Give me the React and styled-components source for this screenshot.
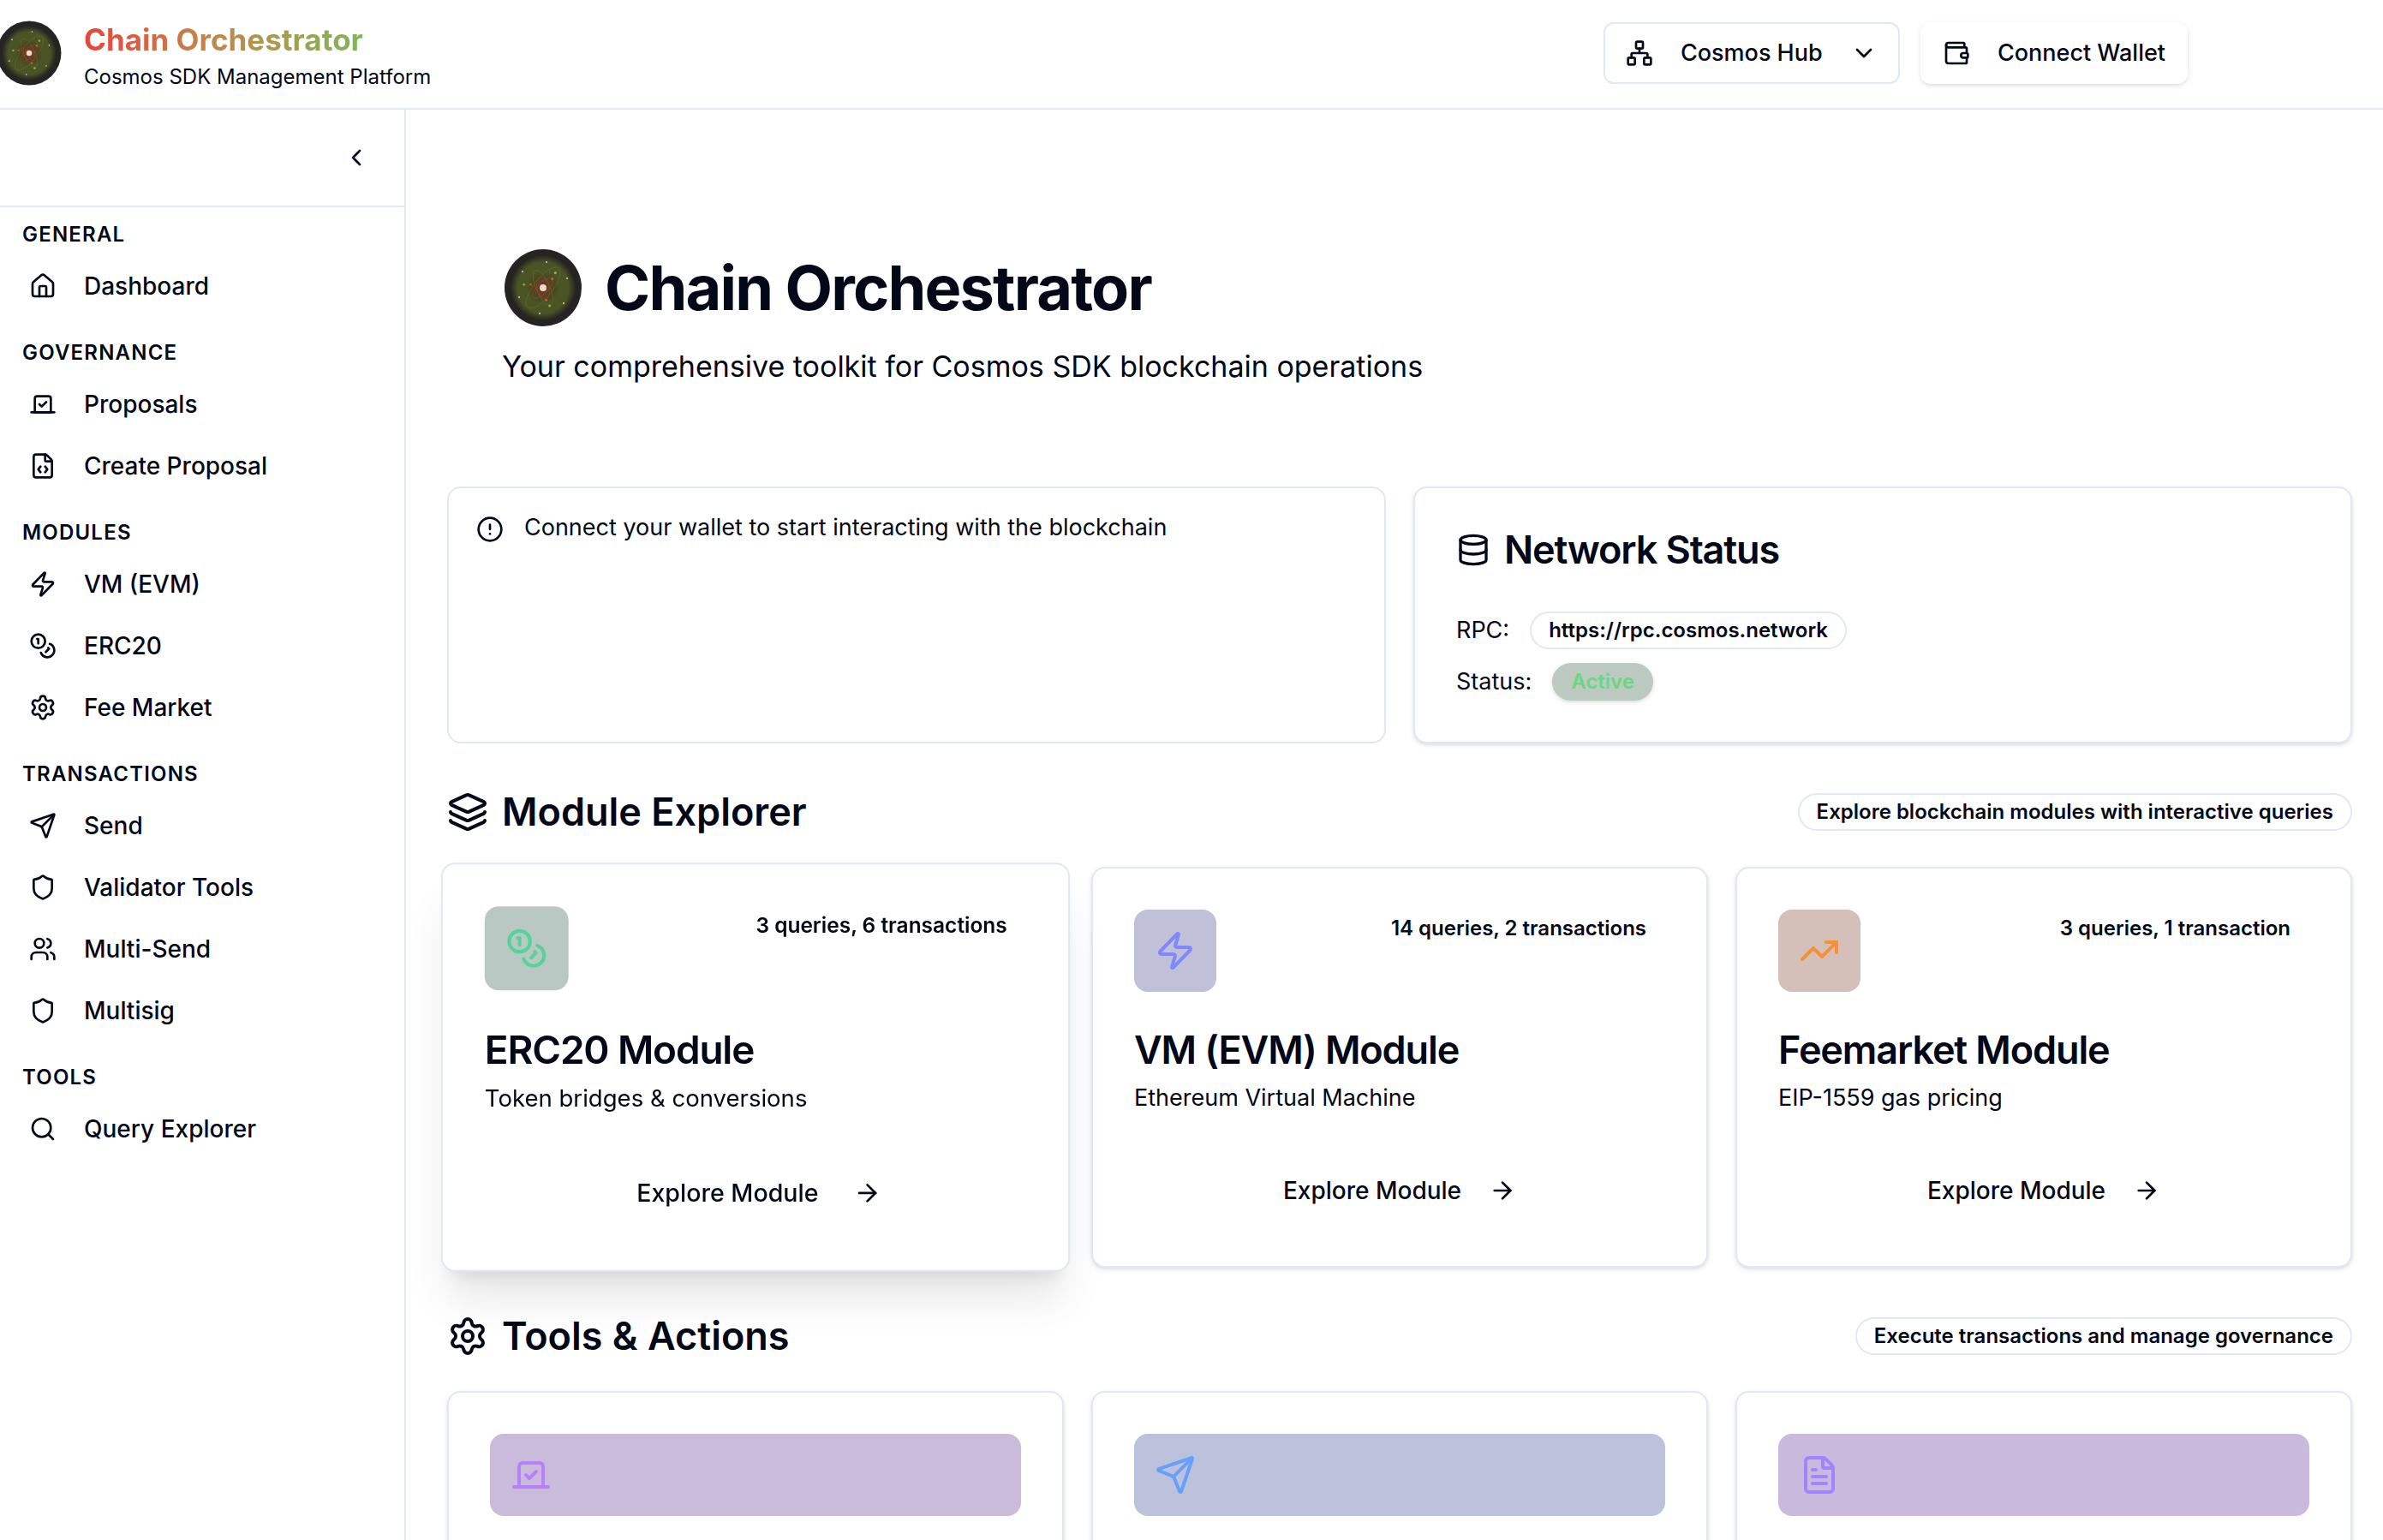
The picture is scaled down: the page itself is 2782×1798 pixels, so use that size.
import React from 'react';
import styled, { createGlobalStyle, css } from 'styled-components';
import {
  ArrowRight,
  ChevronDown,
  ChevronLeft,
  CircleAlert,
  Coins,
  Database,
  FileCode,
  FileText,
  House,
  Layers,
  Network,
  Search,
  Send,
  Settings,
  Shield,
  TrendingUp,
  Users,
  Vote,
  Wallet,
  Zap,
} from 'lucide-react';

const COLORS = {
  text: '#020817',
  border: '#e2e8f0',
  white: '#ffffff',
};

const SHADOWS = {
  card: '0 2px 6px rgba(0, 0, 0, 0.1), 0 2px 4px -2px rgba(0, 0, 0, 0.1)',
  raised:
    '0 40px 50px -10px rgba(0, 0, 0, 0.1), 0 16px 20px -12px rgba(0, 0, 0, 0.1)',
};

const NAV_GROUPS = [
  {
    label: 'General',
    items: [{ name: 'Dashboard', icon: House }],
  },
  {
    label: 'Governance',
    items: [
      { name: 'Proposals', icon: Vote },
      { name: 'Create Proposal', icon: FileCode },
    ],
  },
  {
    label: 'Modules',
    items: [
      { name: 'VM (EVM)', icon: Zap },
      { name: 'ERC20', icon: Coins },
      { name: 'Fee Market', icon: Settings },
    ],
  },
  {
    label: 'Transactions',
    items: [
      { name: 'Send', icon: Send },
      { name: 'Validator Tools', icon: Shield },
      { name: 'Multi-Send', icon: Users },
      { name: 'Multisig', icon: Shield },
    ],
  },
  {
    label: 'Tools',
    items: [{ name: 'Query Explorer', icon: Search }],
  },
];

const MODULES = [
  {
    name: 'ERC20 Module',
    description: 'Token bridges & conversions',
    stats: '3 queries, 6 transactions',
    icon: Coins,
    color: '#54d49a',
    background: '#bac8c3',
    active: true,
  },
  {
    name: 'VM (EVM) Module',
    description: 'Ethereum Virtual Machine',
    stats: '14 queries, 2 transactions',
    icon: Zap,
    color: '#7f88fc',
    background: '#c0c0d8',
  },
  {
    name: 'Feemarket Module',
    description: 'EIP-1559 gas pricing',
    stats: '3 queries, 1 transaction',
    icon: TrendingUp,
    color: '#f99035',
    background: '#d4c0b8',
  },
];

const TOOLS = [
  { id: 'vote', icon: Vote, color: '#b980fb', background: '#cabbda' },
  { id: 'send', icon: Send, color: '#66a0ff', background: '#bdc2dc' },
  { id: 'draft', icon: FileText, color: '#a384ff', background: '#c8b9dd' },
];

const Logo = ({ size }) => (
  <LogoSvg width={size} height={size} viewBox="0 0 96 96" aria-hidden="true">
    <defs>
      <radialGradient id={`glow-${size}`} cx="0.5" cy="0.5" r="0.5">
        <stop offset="0" stopColor="#9a3a26" />
        <stop offset="0.14" stopColor="#6c3a20" />
        <stop offset="0.36" stopColor="#484721" />
        <stop offset="0.5" stopColor="#4a5424" />
        <stop offset="0.78" stopColor="#4b5325" />
        <stop offset="1" stopColor="#252423" />
      </radialGradient>
    </defs>
    <circle cx="48" cy="48" r="45" fill="#252423" />
    <circle cx="48" cy="48" r="38" fill={`url(#glow-${size})`} />
    <g fill="none" strokeWidth="0.5" opacity="0.6">
      <ellipse cx="48" cy="48" rx="29" ry="11" stroke="#7d8a35" transform="rotate(-52 48 48)" />
      <ellipse cx="48" cy="48" rx="22" ry="8" stroke="#7d8a35" transform="rotate(66 48 48)" />
      <ellipse cx="48" cy="48" rx="16" ry="6" stroke="#c4523a" transform="rotate(-45 48 48)" />
      <ellipse cx="48" cy="48" rx="13" ry="7" stroke="#c4523a" transform="rotate(75 48 48)" strokeDasharray="3 1" />
    </g>
    <g fill="#d5d6bd">
      <circle cx="52" cy="18" r="1" />
      <circle cx="24" cy="29" r="1" />
      <circle cx="76" cy="37" r="1" />
      <circle cx="20" cy="59" r="1" />
      <circle cx="72" cy="66" r="1" />
      <circle cx="44" cy="78" r="1" />
    </g>
    <g fill="#8fae35">
      <circle cx="62.3" cy="30.7" r="1.6" />
      <circle cx="25.7" cy="44.3" r="1.4" />
      <circle cx="55.7" cy="69" r="1.6" />
    </g>
    <g fill="#d0503a">
      <circle cx="58.7" cy="37.7" r="1.6" />
      <circle cx="33.3" cy="44" r="1.5" opacity="0.8" />
      <circle cx="51.7" cy="62.3" r="1.6" />
    </g>
    <circle cx="48" cy="48" r="4" fill="#ecdccc" />
  </LogoSvg>
);

const ModuleCard = ({
  name,
  description,
  stats,
  icon: Icon,
  color,
  background,
  active,
}) => {
  return (
    <Card as="article" $raised={active}>
      <CardTop>
        <IconTile $color={color} $background={background}>
          <Icon size={48} />
        </IconTile>
        <Badge $variant="plain">{stats}</Badge>
      </CardTop>
      <ModuleName>{name}</ModuleName>
      <Description>{description}</Description>
      <ExploreButton type="button">
        Explore Module
        <ExploreArrow size={32} $active={active} />
      </ExploreButton>
    </Card>
  );
};

const App = () => {
  return (
    <>
      <GlobalStyle />
      <Shell>
        <Header>
          <HeaderInner>
            <Brand href="#">
              <Logo size={80} />
              <span>
                <BrandName>Chain Orchestrator</BrandName>
                <BrandTagline>Cosmos SDK Management Platform</BrandTagline>
              </span>
            </Brand>
            <HeaderActions>
              <NetworkPicker>
                <Network size={32} />
                <NetworkSelect aria-label="Network" defaultValue="cosmoshub">
                  <option value="cosmoshub">Cosmos Hub</option>
                </NetworkSelect>
                <ChevronDown size={32} />
              </NetworkPicker>
              <WalletButton type="button">
                <Wallet size={32} />
                Connect Wallet
              </WalletButton>
            </HeaderActions>
          </HeaderInner>
        </Header>

        <Body>
          <Sidebar>
            <SidebarTop>
              <CollapseButton type="button" aria-label="Collapse sidebar">
                <ChevronLeft size={32} />
              </CollapseButton>
            </SidebarTop>
            <Nav>
              {NAV_GROUPS.map(({ label, items }) => (
                <section key={label}>
                  <NavLabel>{label}</NavLabel>
                  {items.map(({ name, icon: Icon }) => (
                    <NavLink key={name} href="#">
                      <Icon size={32} />
                      {name}
                    </NavLink>
                  ))}
                </section>
              ))}
            </Nav>
          </Sidebar>

          <Main>
            <Hero>
              <HeroTitleRow>
                <Logo size={96} />
                <HeroTitle>Chain Orchestrator</HeroTitle>
              </HeroTitleRow>
              <HeroText>
                Your comprehensive toolkit for Cosmos SDK blockchain operations
              </HeroText>
            </Hero>

            <Grid $columns={2}>
              <Alert role="status">
                <CircleAlert size={32} />
                <p>Connect your wallet to start interacting with the blockchain</p>
              </Alert>
              <Card>
                <StatusTitle>
                  <Database size={40} />
                  Network Status
                </StatusTitle>
                <StatusList>
                  <StatusRow>
                    <dt>RPC:</dt>
                    <dd><Badge>https://rpc.cosmos.network</Badge></dd>
                  </StatusRow>
                  <StatusRow>
                    <dt>Status:</dt>
                    <dd><Badge $variant="success">Active</Badge></dd>
                  </StatusRow>
                </StatusList>
              </Card>
            </Grid>

            <section>
              <SectionHeader>
                <SectionTitle>
                  <Layers size={48} />
                  Module Explorer
                </SectionTitle>
                <Badge>Explore blockchain modules with interactive queries</Badge>
              </SectionHeader>
              <Grid $columns={3}>
                {MODULES.map((module) => (
                  <ModuleCard key={module.name} {...module} />
                ))}
              </Grid>
            </section>

            <section>
              <SectionHeader>
                <SectionTitle>
                  <Settings size={48} />
                  Tools &amp; Actions
                </SectionTitle>
                <Badge>Execute transactions and manage governance</Badge>
              </SectionHeader>
              <Grid $columns={3}>
                {TOOLS.map(({ id, icon: Icon, color, background }) => (
                  <Card key={id}>
                    <IconTile $color={color} $background={background}>
                      <Icon size={48} />
                    </IconTile>
                  </Card>
                ))}
              </Grid>
            </section>
          </Main>
        </Body>
      </Shell>
    </>
  );
};

const GlobalStyle = createGlobalStyle`
  *, *::before, *::after {
    box-sizing: border-box;
  }

  body {
    margin: 0;
    overflow: hidden;
    background: ${COLORS.white};
    color: ${COLORS.text};
    font-family: Inter, 'Liberation Sans', sans-serif;
    font-size: 27px;
    line-height: 40px;
  }

  h1, h2, h3, p, dl, dd {
    margin: 0;
  }

  a {
    color: inherit;
    text-decoration: none;
  }

  button, select {
    font: inherit;
    color: inherit;
  }

  svg {
    flex-shrink: 0;
  }
`;

// The centered container is a little wider than the window,
// so it bleeds past both edges.
const Shell = styled.div`
  display: flex;
  flex-direction: column;
  height: 100vh;
  margin: 0 -12px 0 -6px;
`;

const LogoSvg = styled.svg`
  display: block;
`;

const Header = styled.header`
  flex-shrink: 0;
  height: 128px;
  padding-bottom: 2px;
  border-bottom: 2px solid ${COLORS.border};
`;

const HeaderInner = styled.div`
  display: flex;
  align-items: center;
  justify-content: space-between;
  height: 100%;
  max-width: 2560px;
`;

const Brand = styled.a`
  display: flex;
  align-items: center;
  gap: 24px;
`;

const BrandName = styled.span`
  display: block;
  width: fit-content;
  font-size: 35px;
  line-height: 56px;
  font-weight: 700;
  background: linear-gradient(to right, #e8443f, #c58149 40%, #b0964f 65%, #7eb75c);
  background-clip: text;
  color: transparent;
`;

const BrandTagline = styled.span`
  display: block;
  font-size: 24px;
  line-height: 32px;
`;

const HeaderActions = styled.div`
  display: flex;
  gap: 24px;
`;

const control = css`
  display: flex;
  align-items: center;
  gap: 32px;
  height: 72px;
  padding: 0 24px;
  border: 2px solid transparent;
  border-radius: 12px;
  background: ${COLORS.white};
  font-weight: 500;
`;

const NetworkPicker = styled.label`
  ${control}
  border-color: ${COLORS.border};
`;

const NetworkSelect = styled.select`
  appearance: none;
  padding: 0;
  border: none;
  background: transparent;
`;

const WalletButton = styled.button`
  ${control}
  box-shadow: ${SHADOWS.card};
`;

const Body = styled.div`
  display: flex;
  flex: 1;
  min-height: 0;
`;

const Sidebar = styled.aside`
  flex: 0 0 480px;
  border-right: 2px solid ${COLORS.border};
`;

const SidebarTop = styled.div`
  display: flex;
  justify-content: flex-end;
  padding: 16px;
  border-bottom: 2px solid ${COLORS.border};
`;

const CollapseButton = styled.button`
  display: grid;
  place-items: center;
  width: 80px;
  height: 80px;
  border: none;
  border-radius: 12px;
  background: transparent;
`;

const Nav = styled.nav`
  display: flex;
  flex-direction: column;
  gap: 26px;
  padding: 16px;
`;

const NavLabel = styled.h3`
  margin-bottom: 8px;
  padding: 0 16px;
  font-size: 24px;
  line-height: 32px;
  font-weight: 600;
  letter-spacing: 0.05em;
  text-transform: uppercase;
`;

const NavLink = styled.a`
  display: flex;
  align-items: center;
  gap: 32px;
  height: 72px;
  padding: 0 24px;
  font-size: 28px;
  font-weight: 500;
`;

const Main = styled.main`
  display: flex;
  flex: 1;
  flex-direction: column;
  gap: 48px;
  min-width: 0;
  padding: 32px 48px;
  overflow: hidden;

  & > * {
    flex-shrink: 0;
  }
`;

const Hero = styled.section`
  padding: 128px 64px 64px;
`;

const HeroTitleRow = styled.div`
  display: flex;
  align-items: center;
  gap: 24px;
`;

const HeroTitle = styled.h1`
  font-size: 72px;
  line-height: 80px;
  font-weight: 700;
  letter-spacing: -0.025em;
`;

const HeroText = styled.p`
  margin-top: 16px;
  font-size: 34px;
  line-height: 56px;
`;

const Grid = styled.div`
  display: grid;
  grid-template-columns: repeat(${(p) => p.$columns}, minmax(0, 1fr));
  gap: 32px;
`;

const Alert = styled.div`
  display: flex;
  gap: 24px;
  padding: 32px;
  border: 2px solid ${COLORS.border};
  border-radius: 16px;
  line-height: 28px;
`;

const Card = styled.div`
  padding: 48px;
  border: 2px solid ${COLORS.border};
  border-radius: 16px;
  background: ${COLORS.white};
  box-shadow: ${(p) => p.$raised ? SHADOWS.raised : SHADOWS.card};
  transform: ${(p) => p.$raised ? 'scale(1.02)' : 'none'};
`;

const cardTitle = css`
  font-size: 45px;
  line-height: 48px;
  font-weight: 600;
  letter-spacing: -0.025em;
`;

const StatusTitle = styled.h3`
  ${cardTitle}
  display: flex;
  align-items: center;
  gap: 16px;
`;

const StatusList = styled.dl`
  display: grid;
  gap: 16px;
  margin-top: 48px;
`;

const StatusRow = styled.div`
  display: flex;
  align-items: center;
  gap: 24px;
  height: 44px;
`;

const BADGE_VARIANTS = {
  outline: css`
    border-color: ${COLORS.border};
  `,
  plain: css`
    border-color: transparent;
  `,
  success: css`
    border-color: transparent;
    background: #bccabf;
    color: #68d980;
    box-shadow: ${SHADOWS.card};
  `,
};

const Badge = styled.span`
  display: block;
  padding: 4px 20px;
  border: 2px solid;
  border-radius: 22px;
  font-size: 24px;
  line-height: 32px;
  font-weight: 600;
  white-space: nowrap;
  ${(p) => BADGE_VARIANTS[p.$variant || 'outline']}
`;

const SectionHeader = styled.div`
  display: flex;
  align-items: center;
  justify-content: space-between;
  margin-bottom: 32px;
`;

const SectionTitle = styled.h2`
  display: flex;
  align-items: center;
  gap: 16px;
  font-size: 45px;
  line-height: 64px;
  font-weight: 600;
`;

const CardTop = styled.div`
  display: flex;
  align-items: flex-start;
  justify-content: space-between;
`;

const IconTile = styled.div`
  padding: 24px;
  border-radius: 16px;
  color: ${(p) => p.$color};
  background: ${(p) => p.$background};

  & > svg {
    display: block;
  }
`;

const ModuleName = styled.h3`
  ${cardTitle}
  margin-top: 44px;
`;

const Description = styled.p`
  margin-top: 12px;
`;

const ExploreButton = styled.button`
  display: flex;
  align-items: center;
  justify-content: center;
  gap: 32px;
  width: 100%;
  height: 80px;
  margin-top: 48px;
  border: none;
  background: transparent;
  font-size: 28px;
  font-weight: 500;
`;

const ExploreArrow = styled(ArrowRight)`
  transform: translateX(${(p) => p.$active ? '8px' : '0'});
`;

export default App;
